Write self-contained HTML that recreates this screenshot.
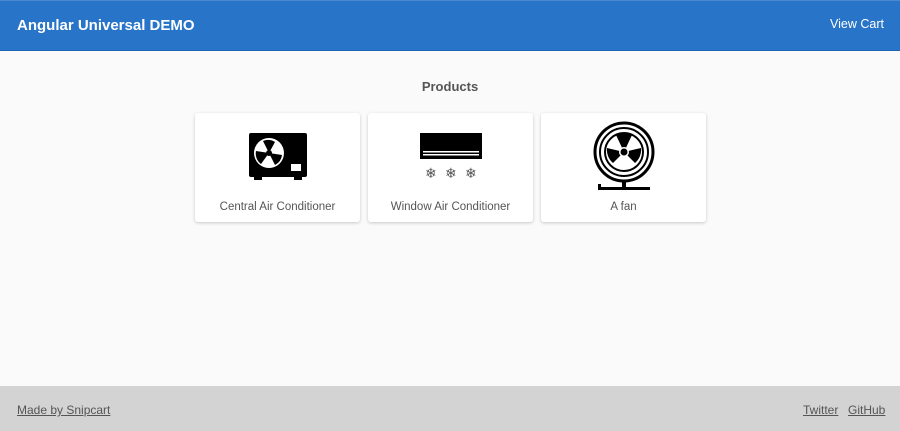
<!DOCTYPE html>
<html><head><style>
*{margin:0;padding:0;box-sizing:border-box}
body{width:900px;height:431px;background:#fafafa;font-family:"Liberation Sans",sans-serif;position:relative;overflow:hidden}
.hdr{position:absolute;left:0;top:0;width:900px;height:51px;background:#2874c9;border-top:1px solid #4a88d0;border-bottom:1px solid #1e64b4}
.hdr .t{position:absolute;left:17px;top:16px;color:#fff;font-weight:bold;font-size:15px}
.hdr .c{position:absolute;right:16px;top:16px;color:#fff;font-size:12.5px}
h2{position:absolute;top:79px;width:900px;text-align:center;font-size:13px;color:#555;font-weight:bold}
.card{position:absolute;top:113px;width:165px;height:109px;background:#fff;border-radius:3px;box-shadow:0 1px 3px rgba(0,0,0,.2)}
.card svg{position:absolute;left:50%;transform:translateX(-50%);top:18px}
.card .l{position:absolute;top:88px;width:100%;text-align:center;font-size:11.5px;color:#555}
.ftr{position:absolute;left:0;top:386px;width:900px;height:45px;background:#d3d3d3;font-size:12px;color:#555}
.ftr a{color:#555;position:absolute;top:17px;text-decoration:underline}
</style></head><body>
<div class="hdr"><span class="t">Angular Universal DEMO</span><span class="c">View Cart</span></div>
<h2>Products</h2>
<div class="card" style="left:195px">
<svg width="60" height="50" viewBox="0 0 60 50"><rect x="1" y="2" width="58" height="44" rx="2" fill="#000"/><rect x="6" y="45" width="8" height="4" fill="#000"/><rect x="46" y="45" width="8" height="4" fill="#000"/><circle cx="21" cy="22" r="15" fill="#fff"/><path d="M21 22L15 10A13 13 0 0 1 27 11Z M21 22L34 24A13 13 0 0 1 27 34Z M21 22L13 33A13 13 0 0 1 8 20Z" fill="#000"/><circle cx="21" cy="22" r="3" fill="#000"/><rect x="43" y="33" width="10" height="7" fill="#fff"/></svg>
<div class="l">Central Air Conditioner</div></div>
<div class="card" style="left:368px">
<svg width="64" height="50" viewBox="0 0 64 50"><rect x="1" y="2" width="62" height="26" fill="#000"/><rect x="4" y="20" width="56" height="1.5" fill="#fff"/><rect x="4" y="23" width="56" height="1.5" fill="#fff"/><g font-size="14" fill="#555" font-family="DejaVu Sans"><text x="6" y="47">❄</text><text x="26" y="47">❄</text><text x="46" y="47">❄</text></g></svg>
<div class="l">Window Air Conditioner</div></div>
<div class="card" style="left:541px">
<svg width="66" height="70" viewBox="0 0 66 70" style="top:8px"><circle cx="33" cy="31" r="29" fill="none" stroke="#000" stroke-width="3"/><circle cx="33" cy="31" r="24" fill="none" stroke="#000" stroke-width="2"/><circle cx="33" cy="31" r="19" fill="none" stroke="#000" stroke-width="2"/><path d="M33 31L25 14A17 17 0 0 1 41 14Z M33 31L50 27A17 17 0 0 1 44 42Z M33 31L22 42A17 17 0 0 1 16 27Z" fill="#000"/><circle cx="33" cy="31" r="5" fill="#fff"/><circle cx="33" cy="31" r="3.5" fill="#000"/><rect x="31" y="59" width="4" height="8" fill="#000"/><rect x="7" y="66" width="52" height="3" fill="#000"/><rect x="7" y="63" width="3" height="4" fill="#000"/></svg>
<div class="l">A fan</div></div>
<div class="ftr"><a style="left:17px">Made by Snipcart</a><a style="left:803px">Twitter</a><a style="left:848px">GitHub</a></div>
</body></html>
